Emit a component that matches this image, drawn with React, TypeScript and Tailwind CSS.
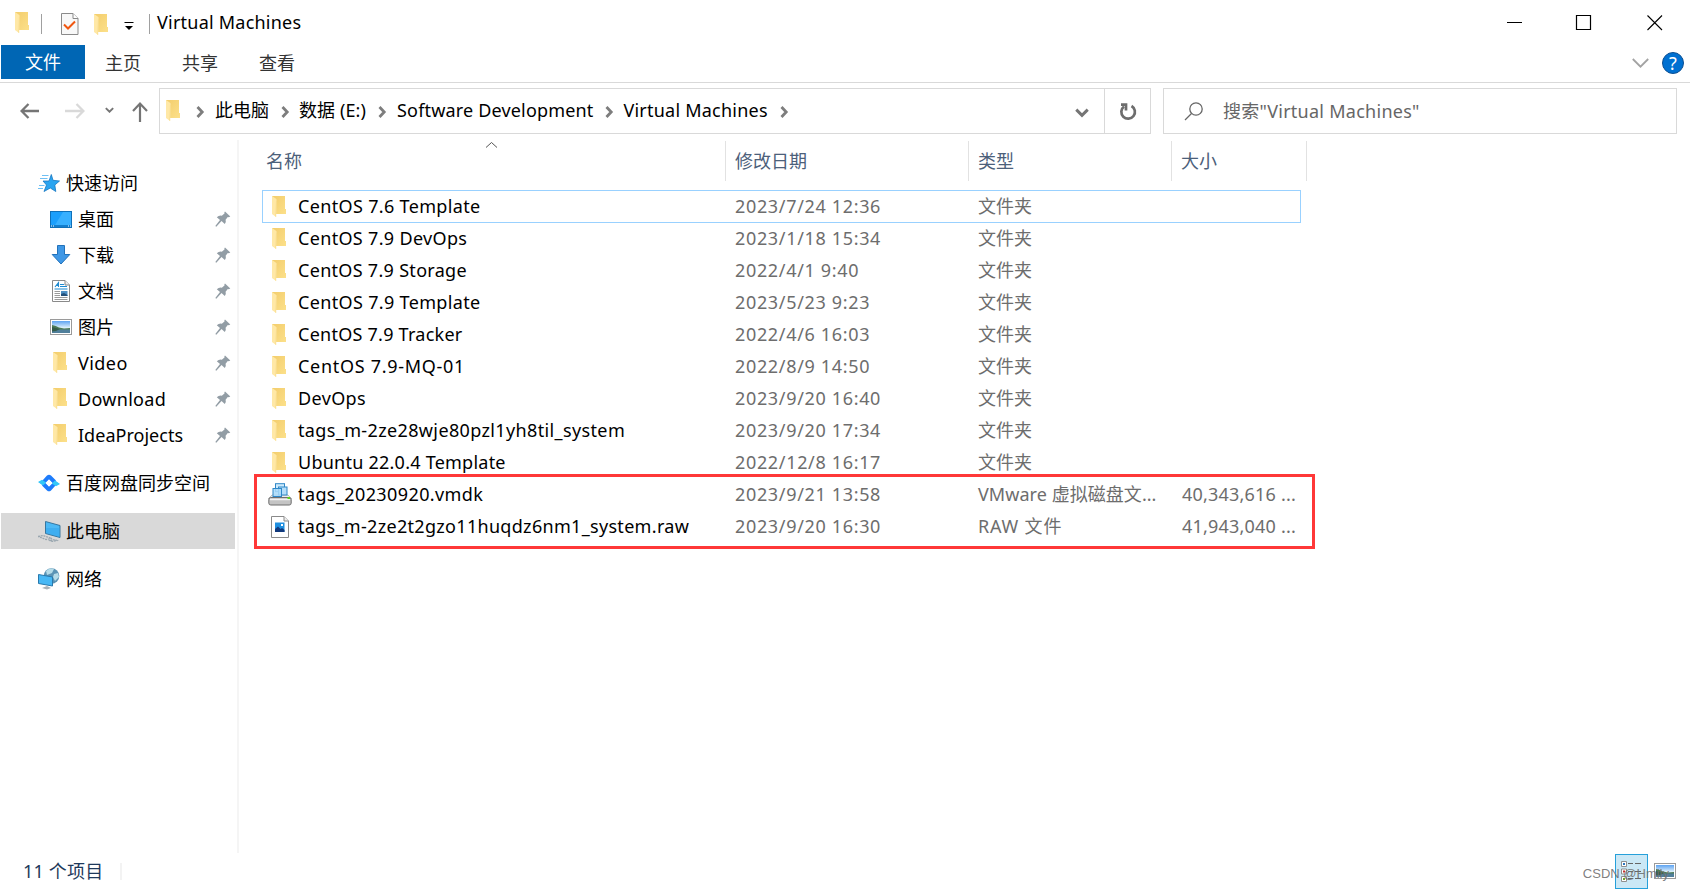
import React from "react";

const UI_FONT = "'Noto Sans','Noto Sans CJK SC',sans-serif";

function Folder() {
  return (
    <svg width="16" height="22" viewBox="0 0 16 22" className="block shrink-0">
      <defs>
        <linearGradient id="fg" x1="0" y1="0" x2="1" y2="1">
          <stop offset="0" stopColor="#f3cd6c" />
          <stop offset="1" stopColor="#fce08a" />
        </linearGradient>
      </defs>
      <path d="M0 0H13V13H14V18H3Z" fill="url(#fg)" />
      <path d="M0 0L4 2.8Q5 3.5 5 5V18H4V21L0 18Z" fill="#ffe8a6" />
      <path d="M5 5V18H4.2V21L3.4 20.4L4 3Z" fill="#f8dc8c" />
    </svg>
  );
}

function Pin() {
  return (
    <svg width="16" height="17" viewBox="0 0 16 17" className="block shrink-0" fill="#929da5">
      <path d="M10 .5L15.3 5.5L13.8 6.2L12.8 6.1L10.6 8.8Q11.4 11.2 9.8 13L6.5 10L1.3 15.8L.3 15L5 9L1.8 6.2Q4 4.2 6.8 4.7L9.5 2.6L9.4 1.3Z" />
    </svg>
  );
}

function Chevron() {
  return (
    <svg width="9" height="12" viewBox="0 0 9 12" className="block" fill="none" stroke="#7d7d7d" strokeWidth="2.8">
      <path d="M1.5 1L6.2 6L1.5 11" />
    </svg>
  );
}

function DownChevron({ w = 11 }: { w?: number }) {
  return (
    <svg width={w} height={w * 0.7} viewBox="0 0 11 7.7" className="block" fill="none" stroke="#757575" strokeWidth="2.3">
      <path d="M1 1.3L5.5 5.8L10 1.3" />
    </svg>
  );
}

const StarIcon = () => (
  <svg width="22" height="19" viewBox="0 0 22 19">
    <path d="M13.300 .5L15 6.300L21.500 7L16.800 11L17.800 17.500L12.300 14L6 17.500L8.500 11L5 7H11Z" fill="#2aa4f0" stroke="#1777c2" strokeWidth=".8" />
    <path d="M4 1.500H10.500M2 4.500H9.500M1 11.500H6.500M0 14.500H5" stroke="#6fc0f4" strokeWidth="1" />
  </svg>
);
const DesktopIcon = () => (
  <svg width="22" height="17" viewBox="0 0 22 17">
    <rect x=".5" y=".5" width="21" height="16" fill="#1b9ffc" stroke="#0f70b9" />
    <path d="M13 1H21V14H5Z" fill="#38b0ff" />
    <path d="M1 15H21" stroke="#0b5c9e" />
    <path d="M1 15h1M3 15h1M18 15h1M20 15h1" stroke="#fff" />
  </svg>
);
const DownIcon = () => (
  <svg width="20" height="20" viewBox="0 0 20 20">
    <path d="M6.5 .5H13.5V9.5H18.8L10 19L1.2 9.5H6.5Z" fill="#3f98e6" stroke="#2272ba" />
  </svg>
);
const DocIcon = () => (
  <svg width="18" height="22" viewBox="0 0 18 22">
    <path d="M.5 .5H13L17.5 5V21.5H.5Z" fill="#fff" stroke="#8a8a8a" />
    <path d="M13 .5V5H17.5" fill="#eee" stroke="#8a8a8a" />
    <path d="M3 7L6.500 2.500V7M4 5.500H7M8 4.500H12M8 6.500H15M2.500 9H15.500" stroke="#1e8ad0" strokeWidth="1.1" fill="none" />
    <path d="M2.500 11.500H8M2.500 13.500H8M2.500 15.500H8M2.500 17.500H15.500M2.500 19.500H15.500" stroke="#9a9a9a" />
    <rect x="9" y="11" width="6.500" height="5" fill="#4d8fc4" />
    <path d="M9 16V14L12 13L15.500 15V16Z" fill="#24507a" />
  </svg>
);
const PicIcon = () => (
  <svg width="22" height="16" viewBox="0 0 22 16">
    <defs>
      <linearGradient id="sky" x1="0" y1="0" x2="0" y2="1">
        <stop offset="0" stopColor="#5da3f2" />
        <stop offset=".55" stopColor="#dbeefa" />
        <stop offset="1" stopColor="#dbeefa" />
      </linearGradient>
    </defs>
    <rect x=".5" y=".5" width="21" height="15" fill="#fff" stroke="#9a9a9a" />
    <rect x="2" y="2" width="18" height="12" fill="url(#sky)" />
    <path d="M2 6Q6 6.500 9 8.500L14 9.500L20 9V11H2Z" fill="#4c7a55" />
    <path d="M2 10.500H20V14H2Z" fill="#507f9b" />
    <path d="M2 8L10 10L6 12L2 12.500Z" fill="#345c4b" />
  </svg>
);
const BaiduIcon = () => (
  <svg width="22" height="20" viewBox="0 0 22 20">
    <path d="M4.500 7.500L9 2.500Q11 .8 13 2.500L18 7.500L14.800 10.500L11 6.500L5 12.500L1 9Z" fill="#1e7cfb" />
    <path d="M17.500 12.500L13 17.500Q11 19.200 9 17.500L4 12.500L7.200 9.500L11 13.500L17 7.500L21 11Z" fill="#1e7cfb" />
    <path d="M0 9L4 6.800L8.200 9.500L5 12.600Z" fill="#34c8f8" />
    <path d="M22 11L18 13.200L13.800 10.500L17 7.400Z" fill="#34c8f8" />
    <path d="M11 6.500L14.500 10L11 13.500L7.500 10Z" fill="#fff" />
  </svg>
);
const PcIcon = () => (
  <svg width="23" height="21" viewBox="0 0 23 21">
    <path d="M7.500 .5L22 4.500V16.500L7.500 12.500Z" fill="#4db9f5" stroke="#2d6d97" strokeWidth=".9" />
    <path d="M8 7L21.500 7V16L8 12Z" fill="#31a4ec" opacity=".5" />
    <path d="M0 15.500L5 14.500L14 17.500L8 18.500ZM12 19.500L17 18.500L19 19.500L14 20.500Z" fill="none" stroke="#9aa7b0" strokeWidth="1.300" strokeDasharray="2 .8" />
  </svg>
);
const NetIcon = () => (
  <svg width="22" height="22" viewBox="0 0 22 22">
    <circle cx="13.500" cy="8" r="7.800" fill="#5a93b5" />
    <path d="M8 3Q12 -.5 16 1L14 5L9 7ZM16 6L20 5L21 9L17 13L15 9Z" fill="#b5dbe8" />
    <path d="M.5 6.500L14.500 9V18L.5 15.500Z" fill="#47b8f5" stroke="#2879ad" />
    <path d="M4 20L9 18L13 20L9 21.500Z" fill="#a9b2b8" />
  </svg>
);
const VmdkIcon = () => (
  <svg width="24" height="23" viewBox="0 0 24 23">
    <path d="M4 12H20L23.300 15.500H.7Z" fill="#ededed" stroke="#a5a5a5" strokeWidth=".7" />
    <rect x=".8" y="14.500" width="22.400" height="7.500" rx="2" fill="#c4c4c4" stroke="#6f6f6f" />
    <path d="M2 16.500H22" stroke="#f2f2f2" strokeWidth="1.500" />
    <rect x="7.500" y=".7" width="9" height="8" fill="#cdeafc" stroke="#2f87c8" />
    <rect x="10.500" y="4" width="8.500" height="8" fill="#b5def9" stroke="#2f87c8" />
    <rect x="5" y="5.500" width="8.500" height="8" fill="#a9dafa" fillOpacity=".85" stroke="#2f87c8" />
    <rect x="19.500" y="14" width="2.500" height="2" fill="#5fd21a" />
  </svg>
);
const RawIcon = () => (
  <svg width="18" height="22" viewBox="0 0 18 22">
    <path d="M.5 .5H13L17.500 5V21.500H.5Z" fill="#fff" stroke="#8a8a8a" />
    <path d="M13 .5V5H17.500" fill="#eee" stroke="#8a8a8a" />
    <rect x="4" y="6.500" width="9.500" height="9.500" fill="#1f8fe0" />
    <path d="M4 13L7 10.500L9.500 13L11 12L13.500 14V16H4Z" fill="#12397c" />
    <rect x="10" y="8" width="2" height="2" fill="#fff" />
  </svg>
);

type Side = { icon: React.ReactNode; label: string; cls?: string };
const quick: Side[] = [
  { icon: <DesktopIcon />, label: "桌面" },
  { icon: <DownIcon />, label: "下载" },
  { icon: <DocIcon />, label: "文档" },
  { icon: <PicIcon />, label: "图片" },
  { icon: <Folder />, label: "Video", cls: "tracking-[0.45px]" },
  { icon: <Folder />, label: "Download", cls: "tracking-[0.3px]" },
  { icon: <Folder />, label: "IdeaProjects", cls: "tracking-[0.02px]" },
];

type Entry = { name: string; cls: string; date: string; type?: string; typeCls?: string; size?: string };
const files: Entry[] = [
  { name: "CentOS 7.6 Template", cls: "tracking-[0.34px]", date: "2023/7/24 12:36" },
  { name: "CentOS 7.9 DevOps", cls: "tracking-[0.33px]", date: "2023/1/18 15:34" },
  { name: "CentOS 7.9 Storage", cls: "tracking-[0.3px]", date: "2022/4/1 9:40" },
  { name: "CentOS 7.9 Template", cls: "tracking-[0.34px]", date: "2023/5/23 9:23" },
  { name: "CentOS 7.9 Tracker", cls: "tracking-[0.25px]", date: "2022/4/6 16:03" },
  { name: "CentOS 7.9-MQ-01", cls: "tracking-[0.7px]", date: "2022/8/9 14:50" },
  { name: "DevOps", cls: "tracking-[0.35px]", date: "2023/9/20 16:40" },
  { name: "tags_m-2ze28wje80pzl1yh8til_system", cls: "tracking-[0.37px]", date: "2023/9/20 17:34" },
  { name: "Ubuntu 22.0.4 Template", cls: "tracking-[0.24px]", date: "2022/12/8 16:17" },
  { name: "tags_20230920.vmdk", cls: "tracking-[0.4px]", date: "2023/9/21 13:58", type: "VMware 虚拟磁盘文...", typeCls: "tracking-[0.05px]", size: "40,343,616 ..." },
  { name: "tags_m-2ze2t2gzo11huqdz6nm1_system.raw", cls: "tracking-[0.31px]", date: "2023/9/20 16:30", type: "RAW 文件", typeCls: "tracking-[0.8px]", size: "41,943,040 ..." },
];

function SideRoot({ icon, label, active }: { icon: React.ReactNode; label: string; active?: boolean }) {
  return (
    <div className={`flex h-9 w-[234px] items-center pl-[37px] ${active ? "bg-[#d9d9d9]" : ""}`}>
      <div className="flex w-[28px] shrink-0 items-center">{icon}</div>
      <span>{label}</span>
    </div>
  );
}

export default function App() {
  return (
    <div
      className="relative flex h-[890px] w-[1690px] flex-col overflow-hidden bg-white text-[18px] leading-6 whitespace-pre text-black"
      style={{ fontFamily: UI_FONT }}
    >
      <header className="flex h-[45px] shrink-0 items-start">
        <div className="flex w-[41px] pt-3 pl-[15px]"><Folder /></div>
        <div className="mt-[14px] h-5 w-px bg-[#a0a0a0]" />
        <svg width="18" height="22" viewBox="0 0 18 22" className="mt-[13px] ml-[19px]" preserveAspectRatio="none">
          <path d="M.5 .5H12L17 5.500V21.500H.5Z" fill="#f8f8f8" stroke="#8a8a8a" />
          <path d="M12 .5V5.500H17" fill="#fff" stroke="#8a8a8a" />
          <path d="M3 11.500L7 15.500L14 8.500" fill="none" stroke="#f0560f" strokeWidth="2" />
        </svg>
        <div className="mt-[14px] ml-[15px]"><Folder /></div>
        <svg width="10" height="9" viewBox="0 0 10 9" className="mt-[22px] ml-[14px]">
          <path d="M.5 .5H9.500" stroke="#000" />
          <path d="M1 4H9L5 8Z" />
        </svg>
        <div className="mt-[14px] ml-[15px] h-5 w-px bg-[#a0a0a0]" />
        <span className="mt-[10px] ml-[7px] tracking-[0.23px]">Virtual Machines</span>
        <div className="ml-auto flex pt-[15px] pr-[27px]">
          <svg width="156" height="17" viewBox="0 0 156 17" fill="none" stroke="#000">
            <path d="M0 7.500H15" />
            <path d="M69.500 .5H83.500V14.500H69.500Z" strokeWidth="1.200" />
            <path d="M140.500 .5L155 15M155 .5L140.500 15" strokeWidth="1.100" />
          </svg>
        </div>
      </header>

      <nav className="flex h-[38px] shrink-0 border-b border-[#d9d9d9] text-[#333]">
        <div className="ml-px flex h-[34px] w-[84px] items-center justify-center bg-[#0066b4] text-white">文件</div>
        <span className="mt-[6px] ml-[20px]">主页</span>
        <span className="mt-[6px] ml-[41px]">共享</span>
        <span className="mt-[6px] ml-[41px]">查看</span>
        <div className="ml-auto flex items-center gap-[13px] pr-[6px] pb-1">
          <svg width="17" height="10" viewBox="0 0 17 10" className="mt-[2px]" fill="none" stroke="#a3a3a3" strokeWidth="1.800">
            <path d="M.8 1L8.500 8.700L16.200 1" />
          </svg>
          <div className="mt-[2px] flex size-[22px] items-center justify-center rounded-full border border-[#0c4f92] bg-[#0070d1] text-[18px] text-white">?</div>
        </div>
      </nav>

      <div className="flex h-[57px] shrink-0 pt-[5px]">
        <div className="flex w-[159px] items-start pt-[14px] pl-5">
          <svg width="19" height="16" viewBox="0 0 19 16" className="mt-[1px]" fill="none" stroke="#757575" strokeWidth="2.300">
            <path d="M19 8H2M8.500 1L1.600 8L8.500 15" />
          </svg>
          <svg width="20" height="16" viewBox="0 0 20 16" className="mt-[1px] ml-[26px]" fill="none" stroke="#d9d9d9" strokeWidth="2.300">
            <path d="M0 8H18M11.500 1L18.400 8L11.500 15" />
          </svg>
          <div className="mt-[5px] ml-5"><DownChevron w={9} /></div>
          <svg width="16" height="20" viewBox="0 0 16 20" className="ml-[18px]" fill="none" stroke="#757575" strokeWidth="2.200">
            <path d="M8 20V2M1 9L8 1.600L15 9" />
          </svg>
        </div>
        <div className="flex h-[46px] w-[992px] border border-[#d9d9d9]">
          <div className="flex flex-1 items-start pt-[11px] pl-[6px]">
            <Folder />
            <div className="mt-[6px] ml-[14px]"><Chevron /></div>
            <span className="-mt-[2px] ml-[10px]">此电脑</span>
            <div className="mt-[6px] ml-3"><Chevron /></div>
            <span className="-mt-[2px] ml-[9px] tracking-[0.1px]">数据 (E:)</span>
            <div className="mt-[6px] ml-[12px]"><Chevron /></div>
            <span className="-mt-[2px] ml-[10px] tracking-[0.17px]">Software Development</span>
            <div className="mt-[6px] ml-3"><Chevron /></div>
            <span className="-mt-[2px] ml-[9px] tracking-[0.23px]">Virtual Machines</span>
            <div className="mt-[6px] ml-3"><Chevron /></div>
            <div className="mt-[8px] mr-[15px] ml-auto"><DownChevron w={14} /></div>
          </div>
          <div className="flex w-[46px] items-center justify-center border-l border-[#d9d9d9]">
            <svg width="18" height="18" viewBox="0 0 18 18" className="mt-px" fill="none" stroke="#6d6d6d" strokeWidth="2.700">
              <path d="M12.500 3A6.800 6.800 0 1 1 5 3.500" />
              <path d="M2 1.700H7V7.500" />
            </svg>
          </div>
        </div>
        <div className="ml-3 flex h-[46px] w-[514px] border border-[#d9d9d9] text-[#666]">
          <svg width="20" height="19" viewBox="0 0 20 19" className="mt-[13px] ml-[20px]" fill="none" stroke="#666" strokeWidth="1.300">
            <circle cx="12" cy="7" r="6.200" />
            <path d="M7.500 11.500L1 18" />
          </svg>
          <span className="mt-[10px] ml-[19px] tracking-[0.27px]">搜索"Virtual Machines"</span>
        </div>
      </div>

      <div className="flex min-h-0 flex-1">
        <aside className="flex h-[713px] w-[239px] shrink-0 flex-col border-r-2 border-[#f5f5f5] pt-[25px] pl-px">
          <SideRoot icon={<StarIcon />} label="快速访问" />
          {quick.map((q) => (
            <div key={q.label} className="flex h-9 items-center pl-[49px]">
              <div className="-ml-[1px] flex w-[23px] shrink-0 justify-center">{q.icon}</div>
              <span className={`ml-[6px] ${q.cls ?? ""}`}>{q.label}</span>
              <div className="mr-[6px] ml-auto"><Pin /></div>
            </div>
          ))}
          <div className="mt-3"><SideRoot icon={<BaiduIcon />} label="百度网盘同步空间" /></div>
          <div className="mt-3"><SideRoot icon={<PcIcon />} label="此电脑" active /></div>
          <div className="mt-3"><SideRoot icon={<NetIcon />} label="网络" /></div>
        </aside>

        <main className="relative flex flex-col pl-[23px]">
          <div className="mt-px flex h-10 text-[#4c607a]">
            <div className="relative w-[464px] border-r border-[#e2e2e2] pt-2 pl-1">
              名称
              <svg width="11" height="6" viewBox="0 0 11 6" className="absolute top-[1px] left-[224px]" fill="none" stroke="#555">
                <path d="M0 5.500L5.500 .5L11 5.500" />
              </svg>
            </div>
            <div className="w-[243px] border-r border-[#e2e2e2] pt-2 pl-[9px]">修改日期</div>
            <div className="w-[203px] border-r border-[#e2e2e2] pt-2 pl-[9px]">类型</div>
            <div className="w-[135px] border-r border-[#e2e2e2] pt-2 pl-[9px]">大小</div>
          </div>
          <div className="mt-[9px] w-[1039px]">
            {files.map((f, i) => (
              <div key={f.name} className={`flex items-center ${i === 0 ? "-mb-px h-[33px] border border-[#99d1ff] pb-px" : "h-8 px-px"}`}>
                <div className="flex w-[35px] shrink-0 items-center justify-center pt-px pr-[1px]">
                  {i === 9 ? <VmdkIcon /> : i === 10 ? <RawIcon /> : <Folder />}
                </div>
                <span className={`w-[437px] ${f.cls}`}>{f.name}</span>
                <span className="w-[243px] tracking-[0.66px] text-[#6d6d6d]">{f.date}</span>
                <span className={`w-[204px] text-[#6d6d6d] ${f.typeCls ?? ""}`}>{f.type ?? "文件夹"}</span>
                <span className="tracking-[0.2px] text-[#6d6d6d]">{f.size ?? ""}</span>
              </div>
            ))}
          </div>
          <div className="absolute top-[334px] left-[15px] h-[75px] w-[1061px] border-[3px] border-[#ff3838]" />
        </main>
      </div>

      <footer className="absolute right-0 bottom-0 left-0 flex h-9 items-start">
        <span className="mt-[5px] ml-[23px] tracking-[0.2px] text-[#1e395b]">11 个项目</span>
        <div className="mt-[9px] ml-[17px] h-[17px] w-[2px] bg-[#f3f3f3]" />
        <div className="mr-[14px] ml-auto flex items-start gap-[6px]">
          <div className="flex h-[35px] w-[33px] items-center justify-center border border-[#26a0da] bg-[#cbe8f6]">
            <svg width="21" height="21" viewBox="0 0 21 21" fill="#fff" stroke="#8f8f8f">
              <path d="M.5 .5H5.500V5.500H.5ZM.5 8H5.500V13H.5ZM.5 15.500H5.500V20.500H.5Z" />
              <path d="M7 2.500H12M14 2.500H20M7 10.500H12M14 10.500H20M7 17.500H12M14 17.500H20" stroke="#666" />
              <path d="M2 3H4" stroke="#2b77c0" strokeWidth="2" />
              <path d="M2 10.500H4" stroke="#c23030" strokeWidth="2" />
              <path d="M2 18H4" stroke="#6da52d" strokeWidth="2" />
            </svg>
          </div>
          <div className="mt-[9px]"><PicIcon /></div>
        </div>
        <span className="absolute top-[12px] right-[21px] text-[13px] leading-4 text-[#707070]/90" style={{ fontFamily: "'Liberation Sans',sans-serif" }}>CSDN @Hmily</span>
      </footer>
    </div>
  );
}
